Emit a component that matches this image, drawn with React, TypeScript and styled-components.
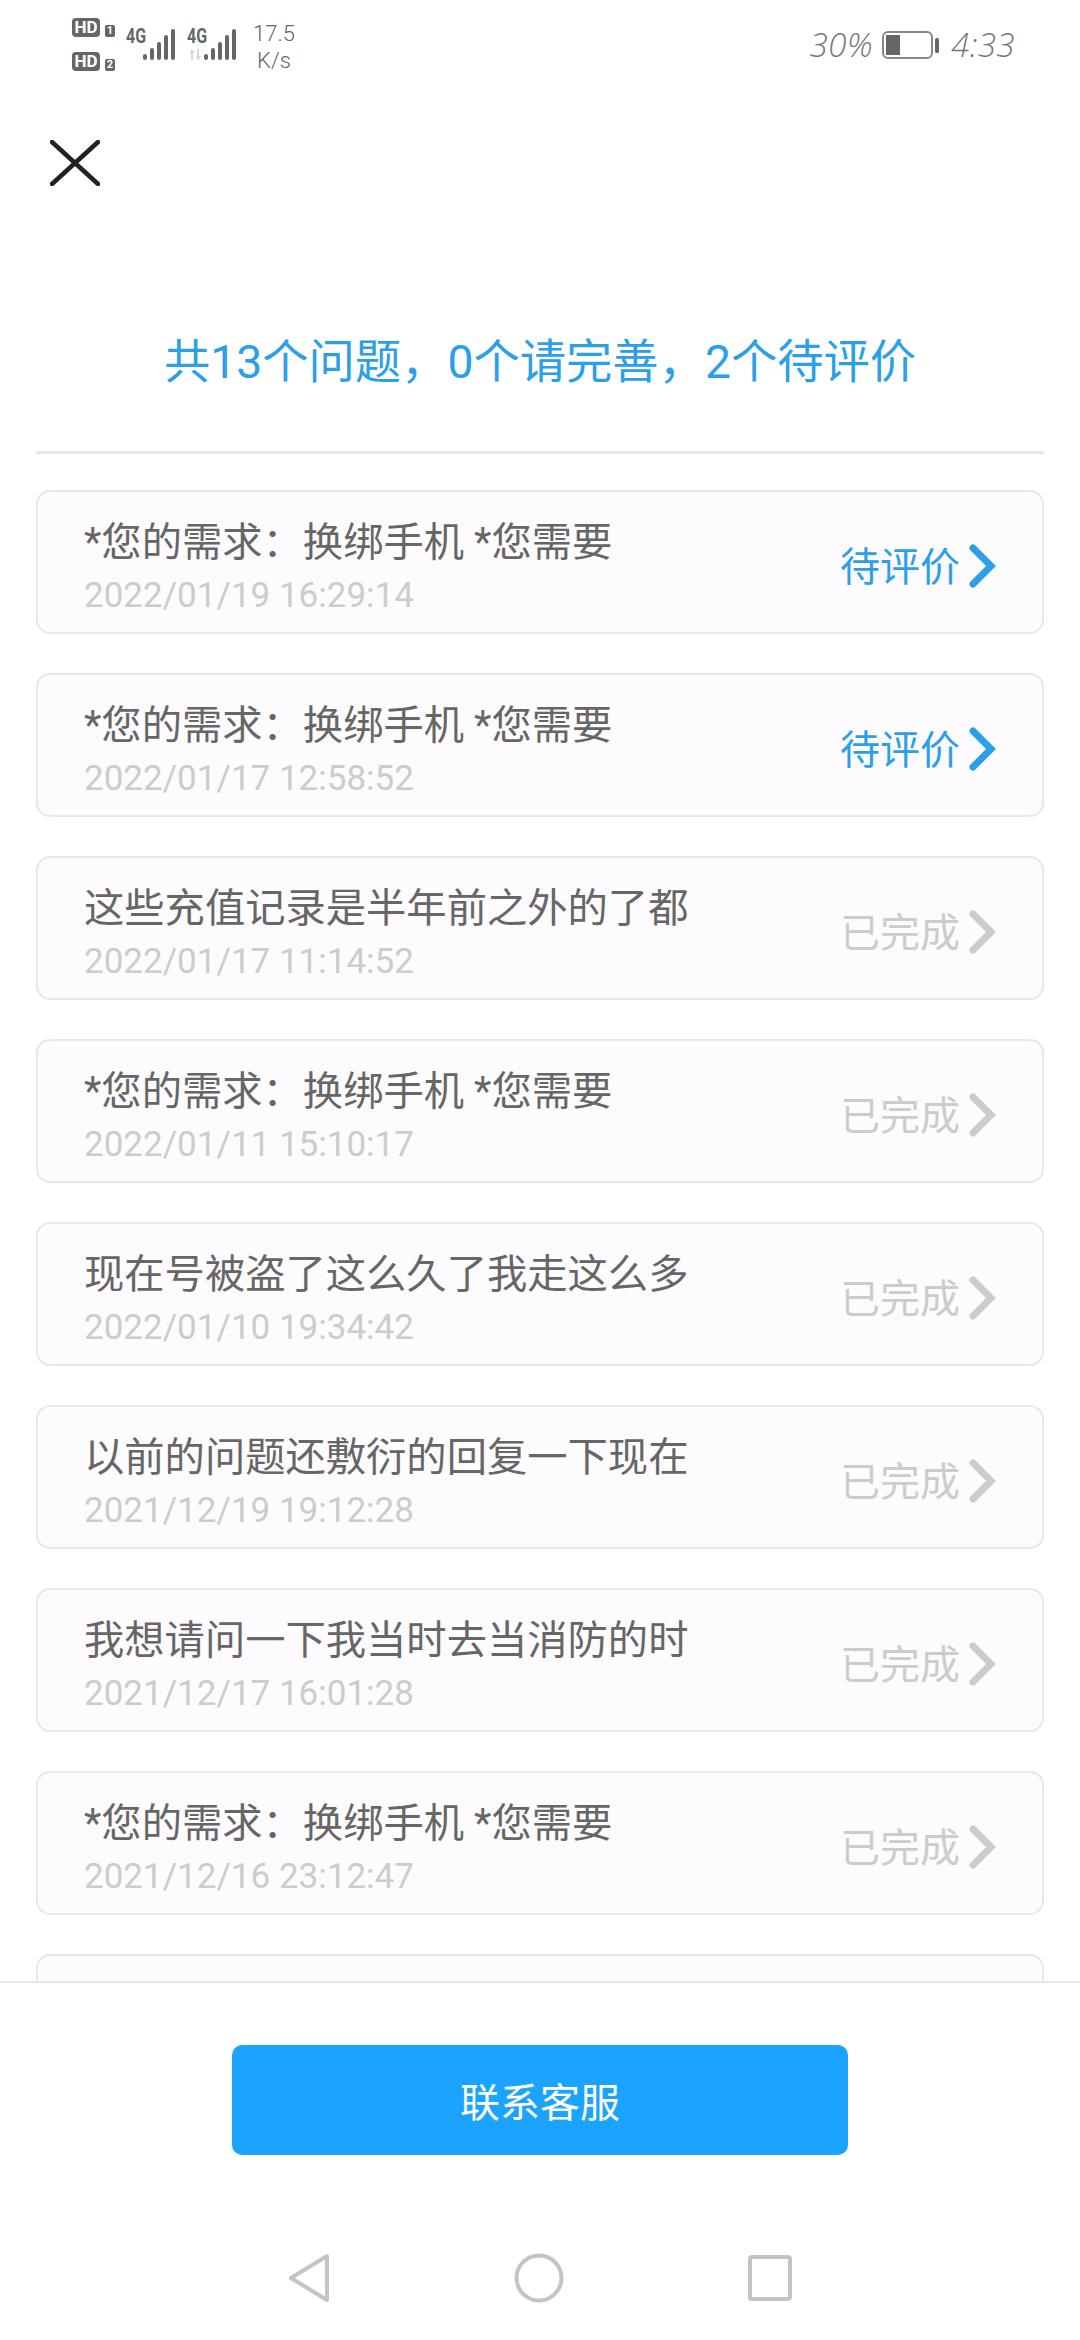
import React from 'react';
import styled, { createGlobalStyle } from 'styled-components';

const GlobalStyle = createGlobalStyle`
  html, body {
    margin: 0;
    padding: 0;
    background: #fff;
  }
  * {
    box-sizing: border-box;
  }
`;

const Page = styled.div`
  width: 1080px;
  height: 2340px;
  display: flex;
  flex-direction: column;
  overflow: hidden;
  background: #fff;
  font-family: Roboto, "Noto Sans CJK SC", sans-serif;
`;

const StatusBar = styled.div`
  height: 90px;
  flex: none;
  display: flex;
  align-items: flex-start;
  justify-content: space-between;
  padding: 18px 65px 0 72px;
  color: #666;
`;

const StatusLeft = styled.div`
  display: flex;
  align-items: flex-start;
`;

const HdStack = styled.div`
  display: flex;
  flex-direction: column;
  gap: 15px;
  margin-right: 11px;
`;

const HdRow = styled.div`
  display: flex;
  align-items: flex-end;
  gap: 5px;
`;

const HdBadge = styled.span`
  width: 28px;
  height: 19px;
  border-radius: 4px;
  background: #666;
  color: #fff;
  font: 700 17px/19px Roboto, sans-serif;
  text-align: center;
`;

const SimBadge = styled.span`
  width: 10px;
  height: 12px;
  border-radius: 2px;
  background: #666;
  color: #fff;
  font: 700 11px/12px Roboto, sans-serif;
  text-align: center;
`;

const Network = styled.div`
  width: 50px;
  height: 44px;
  position: relative;
  margin: 10px 11px 0 0;
`;

const NetworkLabel = styled.span`
  position: absolute;
  left: 0;
  top: -1px;
  font: 700 20px/18px Roboto, sans-serif;
  transform: scaleX(0.8);
  transform-origin: left top;
  color: #666;
`;

const BarsIcon = styled.svg`
  position: absolute;
  right: 0;
  top: 1px;
`;

const DataArrows = styled.svg`
  position: absolute;
  left: 1px;
  top: 21px;
`;

const Speed = styled.div`
  margin: 2px 0 0 3px;
  width: 46px;
  text-align: center;
  font: 300 22px/27px Roboto, sans-serif;
  color: #666;
  white-space: nowrap;
`;

const StatusRight = styled.div`
  display: flex;
  align-items: center;
  margin-top: 9px;
`;

const ItalicText = styled.span`
  font: italic 300 33px/36px "Open Sans", sans-serif;
  color: #777;
  letter-spacing: 0.5px;
`;

const BatteryIcon = styled.svg`
  margin: 0 11px 0 9px;
`;

const CloseRow = styled.div`
  flex: none;
  height: 46px;
  margin-top: 50px;
  padding-left: 50px;
  display: flex;
`;

const Summary = styled.div`
  flex: none;
  margin-top: 146px;
  text-align: center;
  font-size: 46.3px;
  line-height: 60px;
  color: #2ba0e8;
`;

const Divider = styled.div`
  flex: none;
  height: 3px;
  margin: 59px 36px 0;
  background: #e6e6e6;
`;

const List = styled.div`
  flex: 1;
  min-height: 0;
  overflow: hidden;
  padding: 36px 36px 0;
  display: flex;
  flex-direction: column;
  gap: 39px;
`;

const Card = styled.div`
  flex: none;
  height: 144px;
  border: 2px solid #e8e8e8;
  border-radius: 14px;
  background: #fefbfe;
  padding: 25px 46px 0 46px;
  display: flex;
  justify-content: space-between;
`;

const CardText = styled.div`
  display: flex;
  flex-direction: column;
  gap: 5px;
`;

const CardTitle = styled.div`
  font-size: 40.3px;
  line-height: 52px;
  color: #666;
  white-space: nowrap;
`;

const CardDate = styled.div`
  font-size: 35px;
  line-height: 44px;
  color: #ccc;
  white-space: nowrap;
`;

const StatusBox = styled.div<{ $active: boolean }>`
  display: flex;
  align-items: center;
  gap: 9px;
  height: 93px;
  font-size: 40px;
  color: ${({ $active }) => ($active ? '#2ba0e8' : '#ccc')};
`;

const ChevronIcon = styled.svg`
  margin-top: 4px;
`;

const Footer = styled.div`
  flex: none;
  height: 359px;
  border-top: 2px solid #e8e8e8;
  background: #fff;
  display: flex;
  flex-direction: column;
  align-items: center;
`;

const ContactButton = styled.button`
  width: 616px;
  height: 110px;
  margin-top: 62px;
  border: none;
  border-radius: 10px;
  background: #1aa3ff;
  color: #fff;
  font-family: inherit;
  font-size: 40px;
`;

const NavBar = styled.div`
  margin-top: 98px;
  display: flex;
  align-items: center;
  width: 504px;
  justify-content: space-between;
`;

const items = [
  { title: '*您的需求：换绑手机 *您需要', date: '2022/01/19 16:29:14', status: '待评价' },
  { title: '*您的需求：换绑手机 *您需要', date: '2022/01/17 12:58:52', status: '待评价' },
  { title: '这些充值记录是半年前之外的了都', date: '2022/01/17 11:14:52', status: '已完成' },
  { title: '*您的需求：换绑手机 *您需要', date: '2022/01/11 15:10:17', status: '已完成' },
  { title: '现在号被盗了这么久了我走这么多', date: '2022/01/10 19:34:42', status: '已完成' },
  { title: '以前的问题还敷衍的回复一下现在', date: '2021/12/19 19:12:28', status: '已完成' },
  { title: '我想请问一下我当时去当消防的时', date: '2021/12/17 16:01:28', status: '已完成' },
  { title: '*您的需求：换绑手机 *您需要', date: '2021/12/16 23:12:47', status: '已完成' },
];

const Bars = () => (
  <BarsIcon width="33" height="31" viewBox="0 0 33 31" fill="#666">
    <rect x="0" y="25" width="4" height="6" rx="2" />
    <rect x="7" y="19" width="4" height="12" rx="2" />
    <rect x="14" y="13" width="4" height="18" rx="2" />
    <rect x="21" y="6" width="4" height="25" rx="2" />
    <rect x="28" y="0" width="4" height="31" rx="2" />
  </BarsIcon>
);

const Chevron = ({ color }: { color: string }) => (
  <ChevronIcon width="27" height="44" viewBox="0 0 27 44" fill="none">
    <path d="M4 4 L22 22 L4 40" stroke={color} strokeWidth="7" strokeLinecap="round" strokeLinejoin="miter" />
  </ChevronIcon>
);

export default function App() {
  return (
    <Page>
      <GlobalStyle />
      <StatusBar>
        <StatusLeft>
          <HdStack>
            <HdRow>
              <HdBadge>HD</HdBadge>
              <SimBadge>1</SimBadge>
            </HdRow>
            <HdRow>
              <HdBadge>HD</HdBadge>
              <SimBadge>2</SimBadge>
            </HdRow>
          </HdStack>
          <Network>
            <NetworkLabel>4G</NetworkLabel>
            <Bars />
          </Network>
          <Network>
            <NetworkLabel>4G</NetworkLabel>
            <DataArrows width="15" height="11" viewBox="0 0 15 11" fill="#d8d8d8">
              <path d="M4 0 L7 4 H5 V11 H3 V4 H1 Z" />
              <path d="M9 0 H11 V7 H14 L10 11 L8 7 H9 Z" />
            </DataArrows>
            <Bars />
          </Network>
          <Speed>
            17.5
            <br />
            K/s
          </Speed>
        </StatusLeft>
        <StatusRight>
          <ItalicText>30%</ItalicText>
          <BatteryIcon width="58" height="28" viewBox="0 0 58 28" fill="none">
            <rect x="1" y="1" width="49" height="26" rx="5" stroke="#888" strokeWidth="2" />
            <rect x="4" y="4" width="14" height="20" fill="#666" />
            <rect x="53" y="7" width="4" height="15" rx="1.5" fill="#666" />
          </BatteryIcon>
          <ItalicText>4:33</ItalicText>
        </StatusRight>
      </StatusBar>

      <CloseRow>
        <svg width="50" height="46" viewBox="0 0 50 46" fill="none">
          <path d="M2 2 L48 44 M48 2 L2 44" stroke="#222" strokeWidth="4.5" strokeLinecap="round" />
        </svg>
      </CloseRow>

      <Summary>共13个问题，0个请完善，2个待评价</Summary>
      <Divider />

      <List>
        {items.map((item, i) => {
          const active = item.status === '待评价';
          return (
            <Card key={i}>
              <CardText>
                <CardTitle>{item.title}</CardTitle>
                <CardDate>{item.date}</CardDate>
              </CardText>
              <StatusBox $active={active}>
                {item.status}
                <Chevron color={active ? '#2ba0e8' : '#ccc'} />
              </StatusBox>
            </Card>
          );
        })}
        <Card />
      </List>

      <Footer>
        <ContactButton>联系客服</ContactButton>
        <NavBar>
          <svg width="42" height="50" viewBox="0 0 42 50" fill="none">
            <path d="M39 3 L3 25 L39 47 Z" stroke="#c4c4c4" strokeWidth="4" strokeLinejoin="round" />
          </svg>
          <svg width="50" height="50" viewBox="0 0 50 50" fill="none">
            <circle cx="25" cy="25" r="22.5" stroke="#c4c4c4" strokeWidth="4" />
          </svg>
          <svg width="44" height="46" viewBox="0 0 44 46" fill="none">
            <rect x="2" y="2" width="40" height="42" rx="2" stroke="#c4c4c4" strokeWidth="4" />
          </svg>
        </NavBar>
      </Footer>
    </Page>
  );
}
